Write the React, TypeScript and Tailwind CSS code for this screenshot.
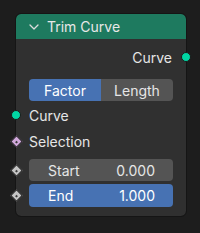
import React from "react";

const Socket = ({ color, side }: { color: string; side: "left" | "right" }) => (
  <span
    className={`absolute top-1/2 -translate-y-1/2 w-[10px] h-[10px] rounded-full border border-[#1a1a1a] ${side === "left" ? "left-[-5px]" : "right-[-5px]"}`}
    style={{ backgroundColor: color }}
  />
);

const Diamond = ({ color }: { color: string }) => (
  <span className="absolute top-1/2 left-[-7px] -translate-y-1/2 w-[14px] h-[14px] flex items-center justify-center">
    <span
      className="w-[9px] h-[9px] rotate-45 border border-[#1a1a1a] flex items-center justify-center"
      style={{ backgroundColor: color }}
    >
      <span className="w-[2px] h-[2px] bg-[#3a3a3a]" />
    </span>
  </span>
);

export default function App() {
  return (
    <div
      className="w-[200px] h-[233px] bg-[#1d1d1d] pt-[14px] pl-[16px] text-[#e6e6e6] text-[14px]"
      style={{ fontFamily: "Inter, 'DejaVu Sans', sans-serif" }}
    >
      <div className="relative w-[170px] h-[202px] rounded-[5px] bg-[#303030] outline outline-1 outline-[#151515] flex flex-col">
        <div className="h-[25px] bg-[#1e7a5f] rounded-t-[5px] flex items-center pl-[13px] gap-[8px] text-[#e8e8e8]">
          <svg width="10" height="6" viewBox="0 0 10 6" className="mt-[1px]">
            <path d="M1 1 L5 5 L9 1" stroke="#dcdcdc" strokeWidth="1.3" fill="none" strokeLinecap="round" strokeLinejoin="round" />
          </svg>
          <span>Trim Curve</span>
        </div>
        <div className="flex flex-col px-[13px] pt-[7px]">
          <div className="relative h-[22px] flex items-center justify-end -mr-[13px] pr-[14px]">
            <span>Curve</span>
            <Socket color="#00d6a3" side="right" />
          </div>
          <div className="mt-[11px] h-[22px] flex rounded-[4px] overflow-hidden">
            <div className="flex-1 bg-[#4772b3] flex items-center justify-center text-white">Factor</div>
            <div className="flex-1 bg-[#545454] flex items-center justify-center">Length</div>
          </div>
          <div className="relative h-[26px] mt-[1px] flex items-center -ml-[13px] pl-[13px]">
            <Socket color="#00d6a3" side="left" />
            <span>Curve</span>
          </div>
          <div className="relative h-[26px] flex items-center -ml-[13px] pl-[13px]">
            <Diamond color="#d0a8da" />
            <span>Selection</span>
          </div>
          <div className="relative h-[22px] mt-[5px] -ml-[13px] pl-[13px]">
            <Diamond color="#c4c4c4" />
            <div className="h-full rounded-[4px] bg-[#545454] flex items-center justify-between pl-[19px] pr-[18px]">
              <span>Start</span>
              <span>0.000</span>
            </div>
          </div>
          <div className="relative h-[23px] mt-[3px] -ml-[13px] pl-[13px]">
            <Diamond color="#c4c4c4" />
            <div className="h-full rounded-[4px] bg-[#4772b3] flex items-center justify-between pl-[19px] pr-[18px] text-white">
              <span>End</span>
              <span>1.000</span>
            </div>
          </div>
        </div>
      </div>
    </div>
  );
}
